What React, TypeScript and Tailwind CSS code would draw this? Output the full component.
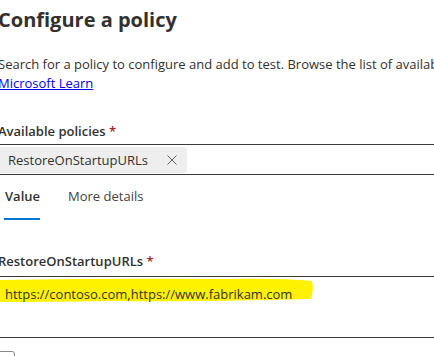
import React from 'react';

const font = { fontFamily: '"Open Sans", "Noto Sans", sans-serif' };

const Highlight: React.FC = () => (
  <svg className="absolute left-0 top-0 pointer-events-none" width="330" height="62" viewBox="0 0 330 62">
    <path
      d="M5 2 Q120 0 230 1 Q290 0 318 3 Q320 12 317 21 Q200 24 120 23 Q40 24 6 24 Q2 14 5 2 Z"
      fill="#fff200"
    />
  </svg>
);

const App: React.FC = () => {
  return (
    <div className="w-[434px] h-[356px] overflow-hidden bg-white text-[#323130]" style={font}>
      <div className="-ml-[2px]">
        <h1 className="pt-[4px] text-[20px] leading-[32px] font-bold whitespace-nowrap">Configure a policy</h1>

        <p className="mt-[19px] text-[13px] leading-[19px] whitespace-nowrap">
          Search for a policy to configure and add to test. Browse the list of available policies on
          <br />
          <a href="#" className="text-[#0000ee] underline">Microsoft Learn</a>
        </p>

        <label className="block mt-[28px] text-[13px] leading-[20px] font-semibold">
          Available policies <span className="text-[#a4262c]">*</span>
        </label>

        <div className="mt-[3px] -ml-[6px] w-[460px] border-y border-[#3b3a39] pt-[2px] pb-[1px] pl-[4px]">
          <div className="inline-flex items-center h-[26px] bg-[#eeeeee] rounded-[3px] pl-[12px] pr-[10px] gap-[19px]">
            <span className="text-[13px] leading-[20px] text-[#323130]">RestoreOnStartupURLs</span>
            <svg width="10" height="10" viewBox="0 0 10 10" className="text-[#605e5c]">
              <path d="M0.5 0.5 L9.5 9.5 M9.5 0.5 L0.5 9.5" stroke="currentColor" strokeWidth="1" />
            </svg>
          </div>
        </div>

        <div className="mt-[11px] flex gap-[28px] pl-[7px]">
          <div className="flex flex-col">
            <span className="text-[13px] leading-[20px] font-semibold">Value</span>
            <span className="mt-[12px] h-[2px] w-[36px] -ml-[1px] bg-[#0078d4]" />
          </div>
          <span className="text-[13px] leading-[20px] text-[#424242]">More details</span>
        </div>

        <label className="block mt-[31px] text-[13px] leading-[20px] font-semibold">
          RestoreOnStartupURLs <span className="text-[#a4262c]">*</span>
        </label>

        <div className="relative mt-[5px] -ml-[6px] w-[460px] h-[62px] border-y border-[#3b3a39] pt-[4px] pl-[13px]">
          <div className="absolute left-[2px] top-[1px]">
            <Highlight />
          </div>
          <span className="relative text-[13px] leading-[20px] text-[#323130]">
            https://contoso.com,https://www.fabrikam.com
          </span>
        </div>

        <div className="mt-[13px] -ml-[1px] w-[18px] h-[18px] rounded-[3px] border border-[#8a8886]" />
      </div>
    </div>
  );
};

export default App;
